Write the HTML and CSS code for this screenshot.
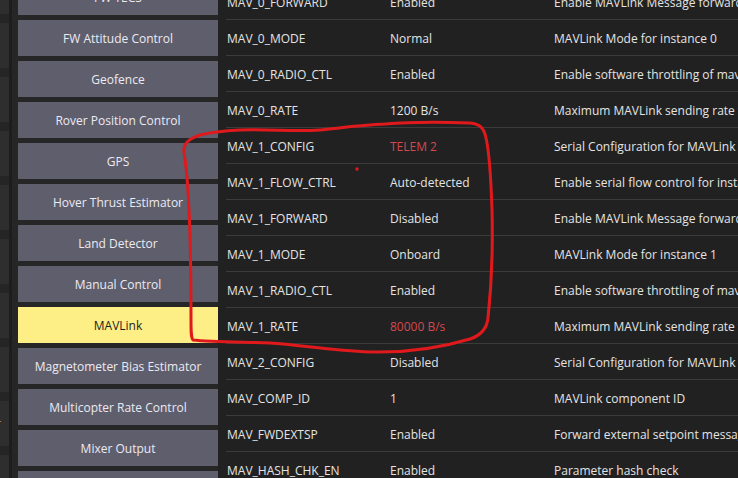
FILE: index.html
```html
<!DOCTYPE html>
<html>
<head>
<meta charset="utf-8">
<link rel="stylesheet" href="styles.css">
</head>
<body>
<div class="app">
  <div class="strip">
    <div class="blk"></div><div class="blk"></div><div class="blk"></div><div class="blk"></div><div class="blk"></div>
    <div class="blk"></div><div class="blk"></div><div class="blk"></div><div class="blk mark"><span>-</span></div><div class="blk"></div>
  </div>
  <div class="divider"></div>
  <div class="sidebar">
    <div class="btn">FW TECS</div>
    <div class="btn">FW Attitude Control</div>
    <div class="btn">Geofence</div>
    <div class="btn">Rover Position Control</div>
    <div class="btn">GPS</div>
    <div class="btn">Hover Thrust Estimator</div>
    <div class="btn">Land Detector</div>
    <div class="btn">Manual Control</div>
    <div class="btn active">MAVLink</div>
    <div class="btn">Magnetometer Bias Estimator</div>
    <div class="btn">Multicopter Rate Control</div>
    <div class="btn">Mixer Output</div>
    <div class="btn">Navigator</div>
  </div>
  <div class="table">
    <div class="row"><span class="name">MAV_0_FORWARD</span><span class="val">Enabled</span><span class="desc">Enable MAVLink Message forwarding for instance 0</span></div>
    <div class="row"><span class="name">MAV_0_MODE</span><span class="val">Normal</span><span class="desc">MAVLink Mode for instance 0</span></div>
    <div class="row"><span class="name">MAV_0_RADIO_CTL</span><span class="val">Enabled</span><span class="desc">Enable software throttling of mavlink on instance 0</span></div>
    <div class="row"><span class="name">MAV_0_RATE</span><span class="val">1200 B/s</span><span class="desc">Maximum MAVLink sending rate for instance 0</span></div>
    <div class="row"><span class="name">MAV_1_CONFIG</span><span class="val red">TELEM 2</span><span class="desc">Serial Configuration for MAVLink (instance 1)</span></div>
    <div class="row"><span class="name">MAV_1_FLOW_CTRL</span><span class="val">Auto-detected</span><span class="desc">Enable serial flow control for instance 1</span></div>
    <div class="row"><span class="name">MAV_1_FORWARD</span><span class="val">Disabled</span><span class="desc">Enable MAVLink Message forwarding for instance 1</span></div>
    <div class="row"><span class="name">MAV_1_MODE</span><span class="val">Onboard</span><span class="desc">MAVLink Mode for instance 1</span></div>
    <div class="row"><span class="name">MAV_1_RADIO_CTL</span><span class="val">Enabled</span><span class="desc">Enable software throttling of mavlink on instance 1</span></div>
    <div class="row"><span class="name">MAV_1_RATE</span><span class="val red">80000 B/s</span><span class="desc">Maximum MAVLink sending rate for instance 1</span></div>
    <div class="row"><span class="name">MAV_2_CONFIG</span><span class="val">Disabled</span><span class="desc">Serial Configuration for MAVLink (instance 2)</span></div>
    <div class="row"><span class="name">MAV_COMP_ID</span><span class="val">1</span><span class="desc">MAVLink component ID</span></div>
    <div class="row"><span class="name">MAV_FWDEXTSP</span><span class="val">Enabled</span><span class="desc">Forward external setpoint messages</span></div>
    <div class="row"><span class="name">MAV_HASH_CHK_EN</span><span class="val">Enabled</span><span class="desc">Parameter hash check</span></div>
  </div>
</div>
<svg class="ink" width="738" height="478" viewBox="0 0 738 478">
  <path d="M200 135 C188 139 183 144 184 152 C186 165 188 185 189 210 C191 250 191 290 191 320 C191 332 191 338 193 340 C210 342 240 342 270 343 C300 345 330 350 370 352 C410 353 440 348 470 339 C482 335 487 328 488 318 C491 290 493 250 492 210 C491 180 490 155 486 138 C484 128 480 124 470 123 C440 122 410 122 385 124 C360 125 340 128 320 130 C295 132 270 129 240 130 C222 131 208 133 200 135 Z" fill="none" stroke="#e0191c" stroke-width="3" stroke-linejoin="round"/>
  <circle cx="357" cy="169" r="1.7" fill="#e0191c"/>
</svg>
</body>
</html>
```
FILE: styles.css
```css
html, body {
  margin: 0;
  padding: 0;
  width: 738px;
  height: 478px;
  overflow: hidden;
  background: #222222;
  font-family: "Open Sans", "Noto Sans", "Liberation Sans", sans-serif;
}
.app {
  display: flex;
  height: 478px;
  overflow: hidden;
}
.strip {
  width: 9px;
  flex: none;
  margin-top: -31px;
  display: flex;
  flex-direction: column;
  gap: 9px;
  background: #252525;
}
.blk {
  height: 45px;
  flex: none;
  background: #2e2e2e;
  position: relative;
  overflow: hidden;
}
.mark span {
  position: absolute;
  left: -2px;
  top: 12px;
  color: #c79a4a;
  font-size: 10px;
}
.divider {
  width: 3px;
  flex: none;
  background: #1d1d1d;
}
.sidebar {
  width: 200px;
  flex: none;
  padding-left: 6px;
  margin-top: -21px;
  display: flex;
  flex-direction: column;
  gap: 5px;
  background: #262626;
}
.btn {
  height: 36px;
  flex: none;
  display: flex;
  align-items: center;
  justify-content: center;
  background: #5f5e6d;
  color: #eceaf2;
  font-size: 12px;
  white-space: nowrap;
}
.btn.active {
  background: #fdee85;
  color: #1e1e1e;
}
.table {
  flex: 1;
  min-width: 0;
  margin-top: -16px;
  background: #212121;
  overflow: hidden;
}
.row {
  height: 36px;
  margin-left: 8px;
  padding-top: 2px;
  display: flex;
  align-items: center;
  border-bottom: 1px solid #3b3b3b;
  box-sizing: border-box;
  color: #e4e4e4;
  font-size: 12px;
  white-space: nowrap;
}
.name {
  width: 163px;
  flex: none;
  padding-left: 1px;
}
.val {
  width: 164px;
  flex: none;
}
.val.red {
  color: #d4484f;
}
.desc {
  flex: 1;
  overflow: hidden;
}
.ink {
  position: absolute;
  left: 0;
  top: 0;
  pointer-events: none;
}
```
